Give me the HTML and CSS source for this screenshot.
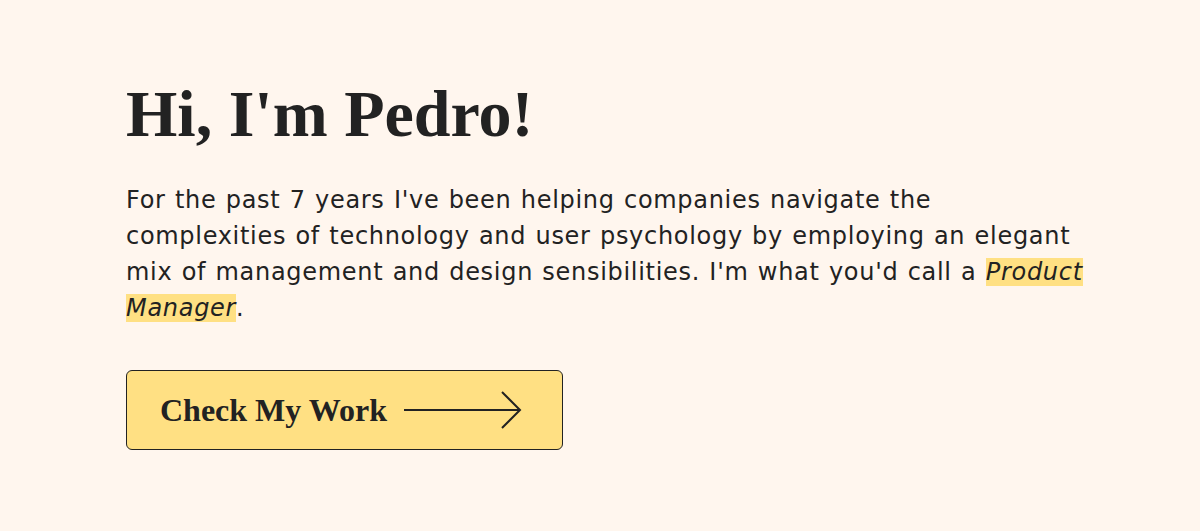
FILE: index.html
```html
<!DOCTYPE html>
<html lang="en">
<head>
    <meta charset="UTF-8">
    <meta name="viewport" content="width=device-width, initial-scale=1.0">
    <title>Pedro</title>
    <link rel="stylesheet" href="styles.css">
</head>
<body>
    <main class="hero">
        <h1 class="title">Hi, I'm Pedro!</h1>
        <p class="intro">For the past 7 years I've been helping companies navigate the complexities of technology and user psychology by employing an elegant mix of management and design sensibilities. I'm what you'd call a <em class="mark">Product Manager</em>.</p>
        <a href="#work" class="cta">
            <span>Check My Work</span>
            <svg class="arrow" width="118" height="40" viewBox="0 0 118 40">
                <path d="M0 20 H116 M98 2 L116 20 L98 38" fill="none" stroke="#222" stroke-width="2"/>
            </svg>
        </a>
    </main>
</body>
</html>
```

FILE: styles.css
```css
body {
    margin: 0;
    padding: 0;
    background-color: #fff6ee;
    color: #222;
}
.hero {
    padding: 74px 0 0 126px;
    width: 970px;
}
.title {
    margin: 0;
    font-family: "Liberation Serif", serif;
    font-size: 66px;
    font-weight: bold;
    line-height: 80px;
}
.intro {
    margin: 28px 0 0;
    font-family: "DejaVu Sans", sans-serif;
    font-size: 24px;
    line-height: 36px;
    letter-spacing: 0.7px;
    word-spacing: 1px;
}
.mark {
    background-color: #ffe083;
}
.cta {
    display: flex;
    align-items: center;
    justify-content: space-between;
    box-sizing: border-box;
    width: 437px;
    height: 80px;
    margin-top: 44px;
    padding: 0 40px 0 33px;
    background-color: #ffe083;
    border: 1.5px solid #222;
    border-radius: 6px;
    color: #222;
    text-decoration: none;
    font-family: "Liberation Serif", serif;
    font-weight: bold;
    font-size: 32px;
}
```
